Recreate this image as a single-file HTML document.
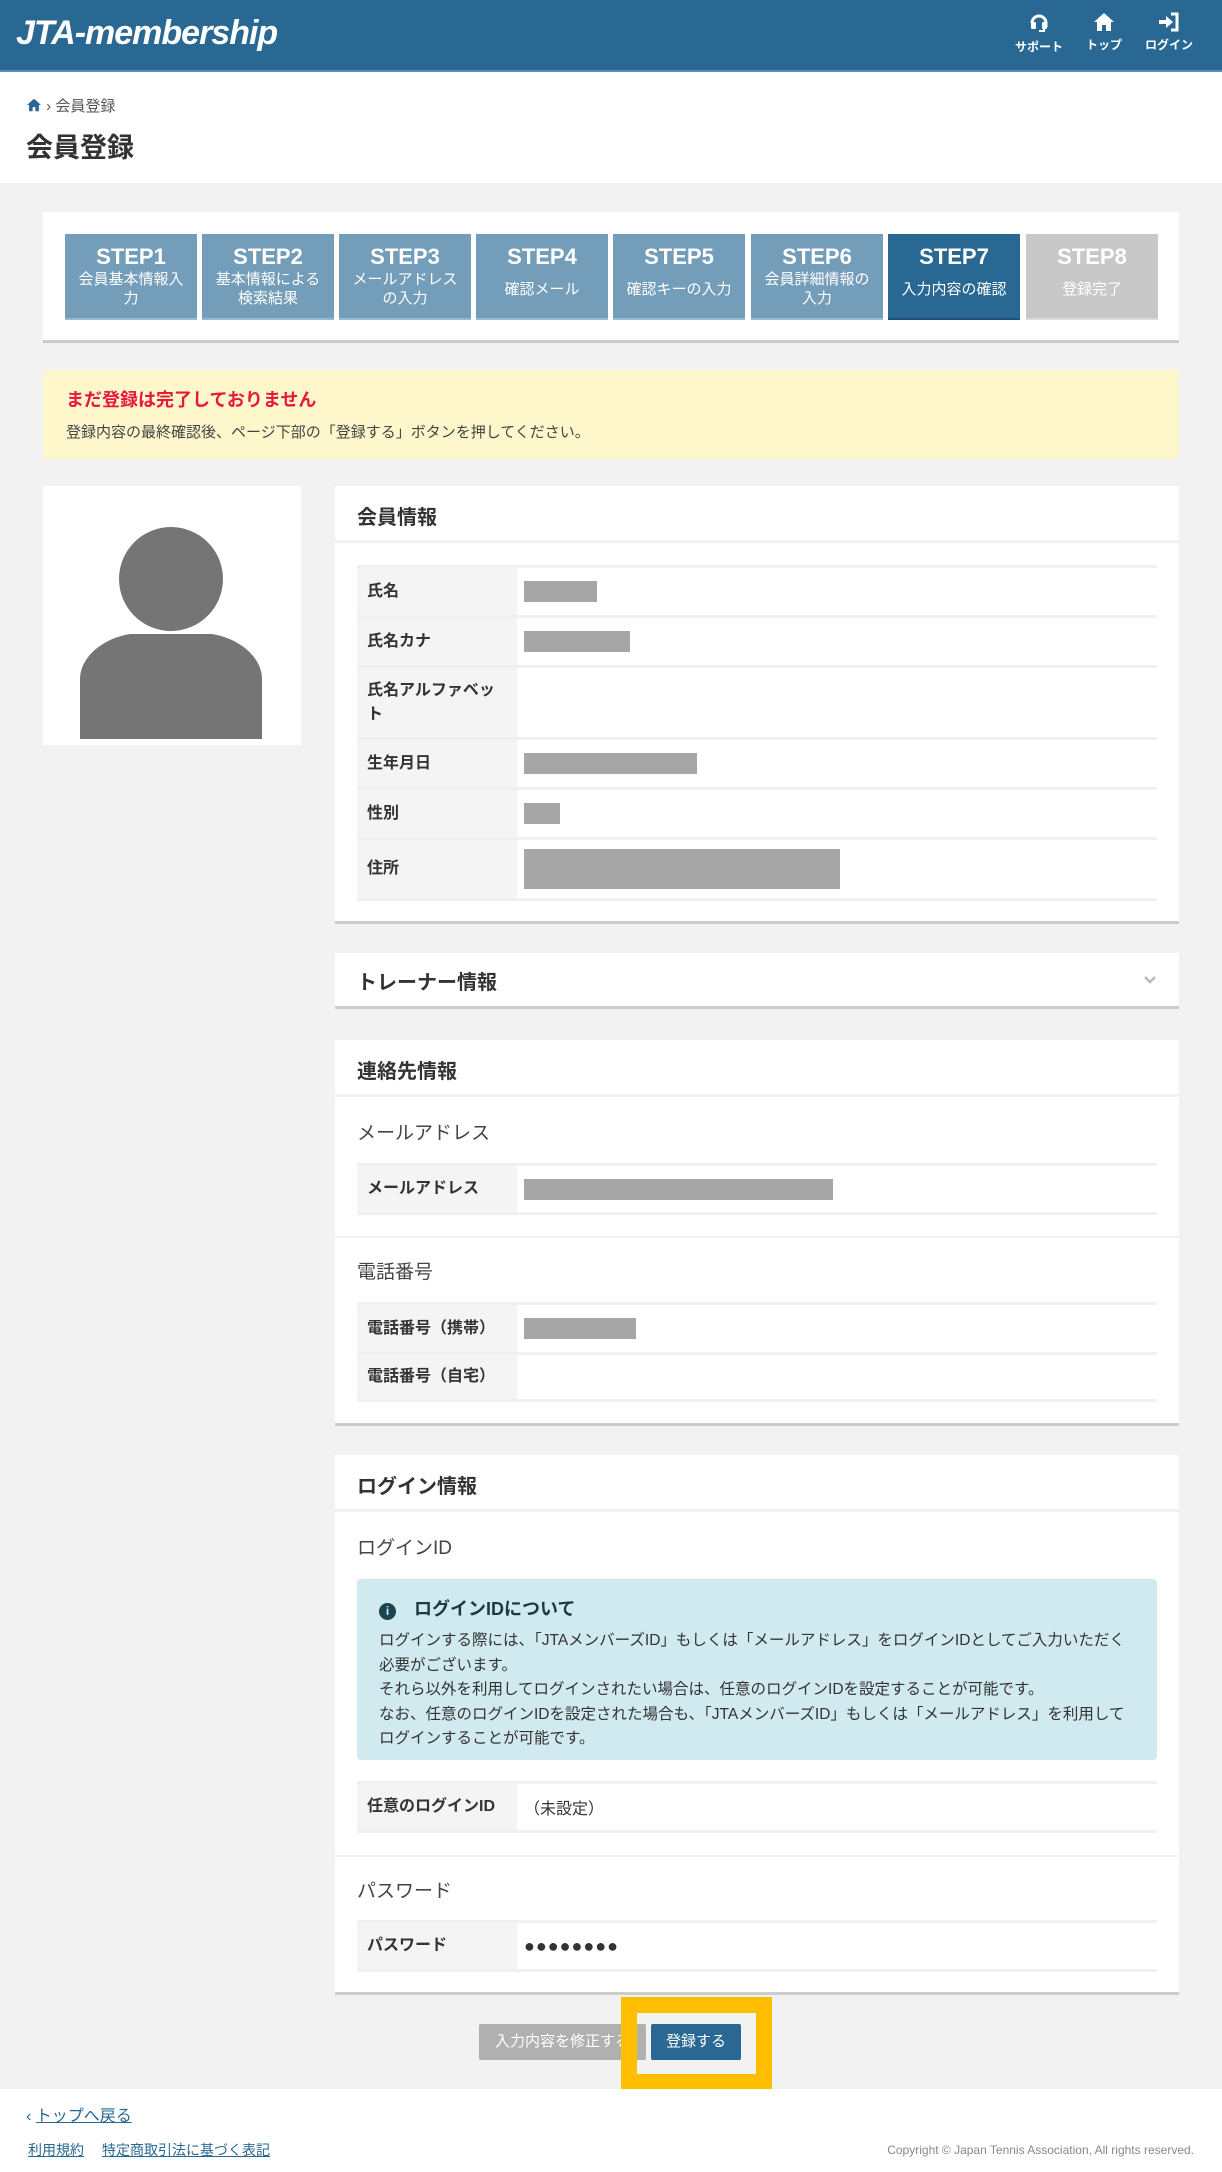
<!DOCTYPE html>
<html><head><meta charset="utf-8"><style>
*{margin:0;padding:0;box-sizing:border-box}
body{width:1222px;height:2172px;background:#f2f2f2;font-family:"Liberation Sans","Noto Sans CJK JP",sans-serif;color:#333;position:relative;overflow:hidden}
.a{position:absolute}
.hdr{left:0;top:0;width:1222px;height:72px;background:#286892;border-bottom:2px solid #5a8db5}
.logo{left:16px;top:14px;color:#fff;font-size:34px;font-weight:bold;font-style:italic;letter-spacing:-1px}
.ic{top:12px;width:60px;text-align:center;color:#fff;font-size:12px;font-weight:bold}
.ic svg{display:block;margin:0 auto 4px}
.white{left:0;top:72px;width:1222px;height:111px;background:#fff}
.card{background:#fff;border-bottom:3px solid #ccc}
.step{top:234px;width:132px;height:86px;background:#739db9;color:#fff;text-align:center;border-bottom:2px solid #9bb9cf}
.step b{display:block;font-size:22px;margin-top:10px;line-height:26px}
.step span{display:block;font-size:15px;line-height:19px;padding:0 10px}
.ch{font-size:20px;font-weight:bold;color:#333;padding:15px 22px;height:57px;border-bottom:3px solid #f2f2f2}
.tbl{position:absolute;left:22px;width:800px}
.row{display:flex;border-top:3px solid #f0f0f0}
.row:last-child{border-bottom:3px solid #f0f0f0}
.lb{width:160px;background:#f4f4f4;font-size:16px;font-weight:bold;padding:0 10px;display:flex;align-items:center;line-height:24px}
.vl{flex:1;display:flex;align-items:center;padding-left:7px;font-size:16px}
.bar{background:#a6a6a6;height:21px}
.sub{position:absolute;left:22px;font-size:19px;color:#444}
.div{position:absolute;left:0;width:844px;border-top:2px solid #f2f2f2}
</style></head><body>
<div class="a hdr"></div>
<div class="a logo">JTA-membership</div>
<div class="a ic" style="left:1009px"><svg width="20" height="22" viewBox="0 0 20 22"><path d="M3 11a7 7 0 0 1 14 0v4" fill="none" stroke="#fff" stroke-width="3"/><rect x="2" y="10" width="5" height="7" rx="1" fill="#fff"/><rect x="13" y="10" width="5" height="7" rx="1" fill="#fff"/><path d="M15 17v2h-5" stroke="#fff" stroke-width="2" fill="none"/></svg>サポート</div>
<div class="a ic" style="left:1074px"><svg width="22" height="20" viewBox="0 0 22 20"><path d="M11 1L1 10h3v9h5v-6h4v6h5v-9h3z" fill="#fff"/></svg>トップ</div>
<div class="a ic" style="left:1139px"><svg width="22" height="20" viewBox="0 0 22 20"><path d="M1 8h7V4l7 6-7 6v-4H1z" fill="#fff"/><path d="M13 2h6v16h-6" stroke="#fff" stroke-width="3" fill="none"/></svg>ログイン</div>
<div class="a white"></div>
<div class="a" style="left:26px;top:95px;font-size:15px;color:#555"><svg width="16" height="14" viewBox="0 0 22 20" style="vertical-align:-1px"><path d="M11 1L1 10h3v9h5v-6h4v6h5v-9h3z" fill="#286892"/></svg> › 会員登録</div>
<div class="a" style="left:26px;top:126px;font-size:27px;font-weight:bold;color:#333">会員登録</div>

<div class="a card" style="left:43px;top:212px;width:1136px;height:131px"></div>
<div class="a step" style="left:65px"><b>STEP1</b><span>会員基本情報入力</span></div>
<div class="a step" style="left:202px"><b>STEP2</b><span>基本情報による検索結果</span></div>
<div class="a step" style="left:339px"><b>STEP3</b><span>メールアドレスの入力</span></div>
<div class="a step" style="left:476px"><b>STEP4</b><span style="margin-top:10px">確認メール</span></div>
<div class="a step" style="left:613px"><b>STEP5</b><span style="margin-top:10px;padding:0">確認キーの入力</span></div>
<div class="a step" style="left:751px"><b>STEP6</b><span>会員詳細情報の入力</span></div>
<div class="a step" style="left:888px;background:#286892;border-bottom-color:#1d5075"><b>STEP7</b><span style="margin-top:10px;padding:0">入力内容の確認</span></div>
<div class="a step" style="left:1026px;background:#c8c8c8;border-bottom-color:#ddd"><b>STEP8</b><span style="margin-top:10px">登録完了</span></div>

<div class="a" style="left:43px;top:370px;width:1136px;height:89px;background:#fff7cc;border-radius:3px"></div>
<div class="a" style="left:66px;top:386px;font-size:18px;font-weight:bold;color:#e8173c">まだ登録は完了しておりません</div>
<div class="a" style="left:66px;top:421px;font-size:15px;color:#444">登録内容の最終確認後、ページ下部の「登録する」ボタンを押してください。</div>

<div class="a" style="left:43px;top:486px;width:258px;height:259px;background:#fff"><svg width="258" height="259" viewBox="0 0 258 259"><circle cx="128" cy="93" r="52" fill="#757575"/><path d="M37 253v-60c0-20 20-40 50-45h82c30 5 50 25 50 45v60z" fill="#757575"/></svg></div>

<div class="a card" style="left:335px;top:486px;width:844px;height:438px">
<div class="ch">会員情報</div>
<div class="tbl" style="top:79px">
<div class="row" style="height:50px"><div class="lb">氏名</div><div class="vl"><div class="bar" style="width:73px"></div></div></div>
<div class="row" style="height:50px"><div class="lb">氏名カナ</div><div class="vl"><div class="bar" style="width:106px"></div></div></div>
<div class="row" style="height:72px"><div class="lb">氏名アルファベット</div><div class="vl"></div></div>
<div class="row" style="height:50px"><div class="lb">生年月日</div><div class="vl"><div class="bar" style="width:173px"></div></div></div>
<div class="row" style="height:50px"><div class="lb">性別</div><div class="vl"><div class="bar" style="width:36px"></div></div></div>
<div class="row" style="height:64px"><div class="lb">住所</div><div class="vl"><div class="bar" style="width:316px;height:40px"></div></div></div>
</div></div>

<div class="a card" style="left:335px;top:953px;width:844px;height:56px"><div class="ch" style="border:0;padding-top:13px">トレーナー情報</div><svg class="a" style="right:22px;top:22px" width="14" height="10" viewBox="0 0 14 10"><path d="M2 2l5 5 5-5" stroke="#bbb" stroke-width="2.5" fill="none"/></svg></div>

<div class="a card" style="left:335px;top:1040px;width:844px;height:386px">
<div class="ch">連絡先情報</div>
<div class="sub" style="top:78px">メールアドレス</div>
<div class="tbl" style="top:123px"><div class="row" style="height:52px"><div class="lb">メールアドレス</div><div class="vl"><div class="bar" style="width:309px"></div></div></div></div>
<div class="div" style="top:196px"></div>
<div class="sub" style="top:217px">電話番号</div>
<div class="tbl" style="top:262px">
<div class="row" style="height:50px"><div class="lb">電話番号（携帯）</div><div class="vl"><div class="bar" style="width:112px"></div></div></div>
<div class="row" style="height:50px"><div class="lb">電話番号（自宅）</div><div class="vl"></div></div></div>
</div>

<div class="a card" style="left:335px;top:1455px;width:844px;height:540px">
<div class="ch">ログイン情報</div>
<div class="sub" style="top:78px">ログインID</div>
<div class="a" style="left:22px;top:124px;width:800px;height:181px;background:#d1eaf0;border-radius:4px;padding:16px 22px;color:#333">
<div style="font-size:18px;font-weight:bold;color:#1a3a44;margin-bottom:8px"><span style="display:inline-block;width:17px;height:17px;border-radius:50%;background:#1a4650;color:#d1eaf0;font-size:12px;text-align:center;line-height:17px;margin-right:18px">i</span>ログインIDについて</div>
<div style="font-size:15.5px;line-height:24.5px">ログインする際には、「JTAメンバーズID」もしくは「メールアドレス」をログインIDとしてご入力いただく必要がございます。<br>それら以外を利用してログインされたい場合は、任意のログインIDを設定することが可能です。<br>なお、任意のログインIDを設定された場合も、「JTAメンバーズID」もしくは「メールアドレス」を利用してログインすることが可能です。</div>
</div>
<div class="tbl" style="top:326px"><div class="row" style="height:52px"><div class="lb">任意のログインID</div><div class="vl">（未設定）</div></div></div>
<div class="div" style="top:400px"></div>
<div class="sub" style="top:421px">パスワード</div>
<div class="tbl" style="top:465px"><div class="row" style="height:52px"><div class="lb">パスワード</div><div class="vl" style="font-size:18px;letter-spacing:1px">●●●●●●●●</div></div></div>
</div>

<div class="a" style="left:479px;top:2024px;width:167px;height:36px;background:#b0b0b0;color:#fff;font-size:15px;line-height:36px;text-align:center;border-radius:2px">入力内容を修正する</div>
<div class="a" style="left:651px;top:2024px;width:90px;height:36px;background:#286892;color:#fff;font-size:15px;line-height:36px;text-align:center;border-radius:2px">登録する</div>
<div class="a" style="left:621px;top:1997px;width:151px;height:93px;border:16px solid #ffbe00"></div>

<div class="a" style="left:0;top:2089px;width:1222px;height:83px;background:#fff"></div>
<div class="a" style="left:26px;top:2102px;font-size:16px;color:#286892">‹ <span style="text-decoration:underline">トップへ戻る</span></div>
<div class="a" style="left:28px;top:2140px;font-size:14px;color:#286892;text-decoration:underline">利用規約</div>
<div class="a" style="left:102px;top:2140px;font-size:14px;color:#286892;text-decoration:underline">特定商取引法に基づく表記</div>
<div class="a" style="right:28px;top:2143px;font-size:12px;color:#888">Copyright © Japan Tennis Association, All rights reserved.</div>
</body></html>
